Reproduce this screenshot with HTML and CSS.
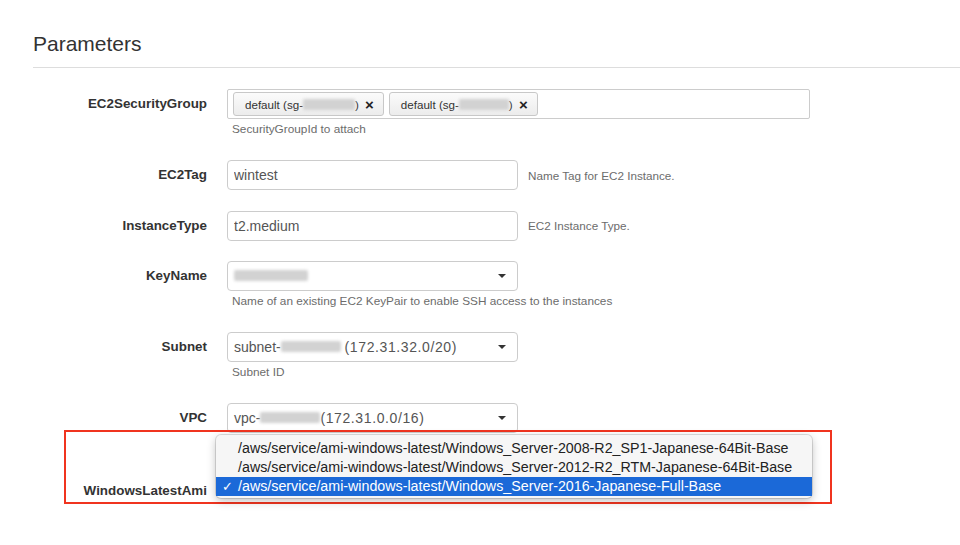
FILE: index.html
```html
<!DOCTYPE html>
<html lang="en">
<head>
    <meta charset="UTF-8">
    <meta name="viewport" content="width=device-width, initial-scale=1.0">
    <title>Parameters</title>
    <link rel="stylesheet" href="styles.css">
</head>
<body>
    <div class="page">
        <h2 class="section-title">Parameters</h2>

        <div class="params">
            <div class="field">
                <label class="field-label">EC2SecurityGroup</label>
                <div>
                    <div class="tag-input">
                        <span class="tag">default (sg-<span class="blur blur-sg1"></span>) <span class="tag-remove">&times;</span></span>
                        <span class="tag">default (sg-<span class="blur blur-sg2"></span>) <span class="tag-remove">&times;</span></span>
                    </div>
                    <div class="help">SecurityGroupId to attach</div>
                </div>
            </div>

            <div class="field field-inline">
                <label class="field-label">EC2Tag</label>
                <div class="control-inline">
                    <input class="text-input" type="text" value="wintest">
                    <span class="help-inline">Name Tag for EC2 Instance.</span>
                </div>
            </div>

            <div class="field field-inline">
                <label class="field-label">InstanceType</label>
                <div class="control-inline">
                    <input class="text-input" type="text" value="t2.medium">
                    <span class="help-inline">EC2 Instance Type.</span>
                </div>
            </div>

            <div class="field">
                <label class="field-label">KeyName</label>
                <div>
                    <div class="select-box"><span class="select-value"><span class="blur blur-key"></span></span></div>
                    <div class="help">Name of an existing EC2 KeyPair to enable SSH access to the instances</div>
                </div>
            </div>

            <div class="field">
                <label class="field-label">Subnet</label>
                <div>
                    <div class="select-box"><span class="select-value">subnet-<span class="blur blur-subnet"></span> <span class="cidr">(172.31.32.0/20)</span></span></div>
                    <div class="help">Subnet ID</div>
                </div>
            </div>

            <div class="field field-nohelp">
                <label class="field-label">VPC</label>
                <div>
                    <div class="select-box"><span class="select-value">vpc-<span class="blur blur-vpc"></span><span class="cidr">(172.31.0.0/16)</span></span></div>
                </div>
            </div>

            <div class="field">
                <label class="field-label">WindowsLatestAmi</label>
                <div>
                    <div class="select-box open">
                        <ul class="popup">
                            <li class="popup-option">/aws/service/ami-windows-latest/Windows_Server-2008-R2_SP1-Japanese-64Bit-Base</li>
                            <li class="popup-option">/aws/service/ami-windows-latest/Windows_Server-2012-R2_RTM-Japanese-64Bit-Base</li>
                            <li class="popup-option selected">/aws/service/ami-windows-latest/Windows_Server-2016-Japanese-Full-Base</li>
                        </ul>
                    </div>
                </div>
            </div>
        </div>

        <!-- annotation frame -->
        <div class="highlight"></div>
    </div>
</body>
</html>
```

FILE: styles.css
```css
body {
    margin: 0;
    font-family: "Liberation Sans", Arial, sans-serif;
    color: #333;
    background-color: #fff;
}

.page {
    position: relative;
    height: 545px;
    box-sizing: border-box;
    padding: 32px 0 0 33px;
    overflow: hidden;
}

.section-title {
    margin: 0;
    padding-bottom: 11px;
    border-bottom: 1px solid #ddd;
    font-size: 21px;
    font-weight: normal;
    line-height: 24px;
    color: #333;
}

.params {
    margin-top: 21px;
}

.field {
    display: grid;
    grid-template-columns: 174px 1fr;
    column-gap: 20px;
    margin-bottom: 22px;
}
.field-inline {
    margin-bottom: 20.5px;
}
.field-nohelp {
    margin-bottom: 43px;
}

.field-label {
    text-align: right;
    font-weight: bold;
    font-size: 13.4px;
    line-height: 30px;
    color: #333;
}

.control-inline {
    display: flex;
    align-items: center;
    gap: 10px;
}

.help {
    margin-top: 2px;
    padding-left: 5px;
    font-size: 11.8px;
    line-height: 17px;
    color: #6c6c6c;
}
.help-inline {
    font-size: 11.7px;
    color: #6c6c6c;
}

/* text fields */
.text-input {
    width: 291px;
    height: 30px;
    box-sizing: border-box;
    margin: 0;
    padding: 0 6px;
    border: 1px solid #ccc;
    border-radius: 4px;
    font-family: inherit;
    font-size: 14px;
    color: #555;
    background-color: #fff;
}

/* tag box */
.tag-input {
    display: flex;
    align-items: center;
    gap: 5px;
    width: 583px;
    height: 30px;
    box-sizing: border-box;
    padding: 2px 5px;
    border: 1px solid #ccc;
    border-radius: 2px;
}

.tag {
    display: flex;
    align-items: center;
    height: 24px;
    box-sizing: border-box;
    padding: 0 9px 0 11px;
    border: 1px solid #c8c8c8;
    border-radius: 3px;
    background: linear-gradient(#fbfbfb, #ececec);
    font-size: 11.6px;
    color: #333;
    white-space: pre;
}
.tag-remove {
    margin-left: 3px;
    font-size: 15px;
    font-weight: bold;
    color: #222;
}

/* selects */
.select-box {
    position: relative;
    display: flex;
    align-items: center;
    width: 291px;
    height: 30px;
    box-sizing: border-box;
    padding: 0 6px;
    border: 1px solid #ccc;
    border-radius: 4px;
    background-color: #fff;
    font-size: 14px;
    color: #555;
}
.select-box::after {
    content: "";
    position: absolute;
    right: 11px;
    top: 12px;
    border-left: 4px solid transparent;
    border-right: 4px solid transparent;
    border-top: 4px solid #333;
}
.select-box.open {
    border-color: transparent;
}
.select-box.open::after {
    display: none;
}

.select-value {
    white-space: pre;
}

.cidr {
    letter-spacing: 0.6px;
}

/* redacted values */
.blur {
    display: inline-block;
    height: 11px;
    background-color: #d2d2d2;
    border-radius: 2px;
    filter: blur(1.5px);
}
.blur-sg1 { width: 52px; }
.blur-sg2 { width: 50px; }
.blur-key { width: 74px; }
.blur-subnet { width: 60px; }
.blur-vpc { width: 60px; }

/* open dropdown list */
.popup {
    position: absolute;
    top: -42px;
    left: -12px;
    z-index: 2;
    width: 596px;
    box-sizing: border-box;
    margin: 0;
    padding: 4px 0 2px;
    list-style: none;
    background-color: #f6f6f6;
    border-radius: 5px;
    box-shadow: 0 0 0 1px rgba(0, 0, 0, 0.12), 0 3px 10px rgba(0, 0, 0, 0.25);
    font-size: 14.25px;
    color: #222;
}
.popup-option {
    position: relative;
    height: 19px;
    line-height: 19px;
    padding-left: 22px;
    white-space: nowrap;
}
.popup-option.selected {
    background-color: #1b69d8;
    color: #fff;
}
.popup-option.selected::before {
    content: "\2713";
    position: absolute;
    left: 6px;
    font-family: "DejaVu Sans", sans-serif;
    font-size: 13px;
}

.highlight {
    position: absolute;
    left: 64px;
    top: 430px;
    width: 768px;
    height: 74px;
    box-sizing: border-box;
    border: 2px solid #f0341f;
    pointer-events: none;
}
```
